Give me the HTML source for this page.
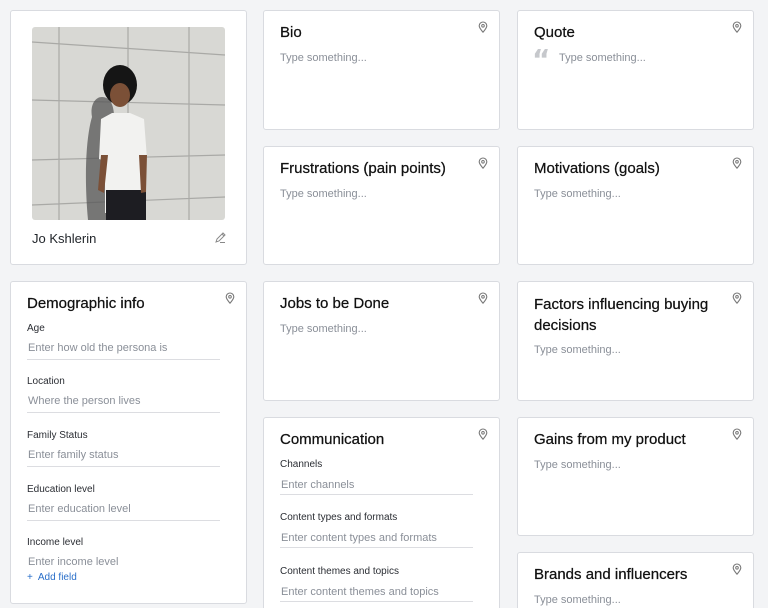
<!DOCTYPE html>
<html style="overflow:hidden;height:608px"><head><style>
body{margin:0;width:768px;height:608px;background:#f3f4f6;font-family:"Liberation Sans",Arial,sans-serif;position:relative;overflow:hidden}
.c{position:absolute;background:#fff;border:1px solid #d9dbe0;border-radius:3px;box-sizing:border-box}
.t{position:absolute;left:16px;top:12px;font-size:15px;color:#111;line-height:20px;-webkit-text-stroke:0.25px #111}
.p{position:absolute;left:16px;font-size:11px;color:#8a8f98}
.pin{position:absolute;right:11px;top:10px;width:10px;height:12px}
.l{position:absolute;left:16px;font-size:10px;color:#2a2d33}
.u{position:absolute;left:16px;width:193px;border-bottom:1px solid #dcdde1}
.ip{position:absolute;left:17px;font-size:11px;color:#8a8f98}
</style></head><body>
<svg width="0" height="0" style="position:absolute"><defs><symbol id="pn" viewBox="0 0 10 12"><path d="M5 11.2C3 8.8 1.2 6.9 1.2 4.8a3.8 3.8 0 0 1 7.6 0C8.8 6.9 7 8.8 5 11.2Z" fill="none" stroke="#777" stroke-width="1.1"/><circle cx="5" cy="4.8" r="1.3" fill="none" stroke="#777" stroke-width="1"/></symbol></defs></svg>

<div class="c" style="left:10px;top:10px;width:237px;height:255px">
<svg style="position:absolute;left:21px;top:16px" width="193" height="193" viewBox="0 0 193 193">
<rect width="193" height="193" rx="3" fill="#d8d8d4"/>
<g stroke="#a9a9a6" stroke-width="1.2" fill="none">
<path d="M27 0V193M96 0V193M157 0V193M0 15L193 28M0 73L193 78M0 133L193 128M0 178L193 170"/></g>
<path d="M70 70c-8 0-12 10-10 20-6 20-8 60-4 103h26V90c0-12-4-20-12-20z" fill="#555" opacity=".75"/>
<ellipse cx="88" cy="58" rx="17" ry="20" fill="#151515"/>
<ellipse cx="88" cy="68" rx="10" ry="12" fill="#7b5037"/>
<path d="M80 86h18l14 6 3 40-6 2 0 52H73l0-52-6-2 2-40z" fill="#f2f2f0"/>
<rect x="74" y="163" width="40" height="30" fill="#1d1d22"/>
<path d="M69 128l-3 35 6 3 4-38zM115 128l-1 37 -5 1 -2-38z" fill="#7b5037"/>
</svg>
<div style="position:absolute;left:21px;top:220px;font-size:13px;color:#1f2328">Jo Kshlerin</div>
<svg style="position:absolute;left:203px;top:221px" width="12" height="12" viewBox="0 0 12 12"><path d="M2 10l1-3 6-6 2 2-6 6zM8 2l2 2M6 10.5h5" fill="none" stroke="#888" stroke-width="1"/></svg>
</div>

<div class="c" style="left:263px;top:10px;width:237px;height:120px"><div class="t">Bio</div><svg class="pin"><use href="#pn"/></svg><div class="p" style="top:41px">Type something...</div></div>
<div class="c" style="left:517px;top:10px;width:237px;height:120px"><div class="t">Quote</div><svg class="pin"><use href="#pn"/></svg><div style="position:absolute;left:14px;top:38px;font-size:28px;font-weight:bold;color:#c6c8cc;line-height:22px;font-family:'DejaVu Sans',sans-serif">&ldquo;</div><div class="p" style="top:41px;left:41px">Type something...</div></div>

<div class="c" style="left:263px;top:146px;width:237px;height:119px"><div class="t">Frustrations (pain points)</div><svg class="pin"><use href="#pn"/></svg><div class="p" style="top:41px">Type something...</div></div>
<div class="c" style="left:517px;top:146px;width:237px;height:119px"><div class="t">Motivations (goals)</div><svg class="pin"><use href="#pn"/></svg><div class="p" style="top:41px">Type something...</div></div>

<div class="c" style="left:263px;top:281px;width:237px;height:120px"><div class="t">Jobs to be Done</div><svg class="pin"><use href="#pn"/></svg><div class="p" style="top:41px">Type something...</div></div>
<div class="c" style="left:517px;top:281px;width:237px;height:120px"><div class="t" style="line-height:21px;width:190px">Factors influencing buying decisions</div><svg class="pin"><use href="#pn"/></svg><div class="p" style="top:62px">Type something...</div></div>

<div class="c" style="left:10px;top:281px;width:237px;height:323px"><div class="t">Demographic info</div><svg class="pin"><use href="#pn"/></svg>
<div class="l" style="top:41px">Age</div><div class="ip" style="top:60px">Enter how old the persona is</div><div class="u" style="top:77px"></div>
<div class="l" style="top:94px">Location</div><div class="ip" style="top:113px">Where the person lives</div><div class="u" style="top:130px"></div>
<div class="l" style="top:148px">Family Status</div><div class="ip" style="top:167px">Enter family status</div><div class="u" style="top:184px"></div>
<div class="l" style="top:202px">Education level</div><div class="ip" style="top:221px">Enter education level</div><div class="u" style="top:238px"></div>
<div class="l" style="top:255px">Income level</div><div class="ip" style="top:274px">Enter income level</div>
<div style="position:absolute;left:16px;top:290px;font-size:10px;color:#2a6fc9">+&nbsp; Add field</div>
</div>

<div class="c" style="left:263px;top:417px;width:237px;height:200px"><div class="t">Communication</div><svg class="pin"><use href="#pn"/></svg>
<div class="l" style="top:41px">Channels</div><div class="ip" style="top:61px">Enter channels</div><div class="u" style="top:76px"></div>
<div class="l" style="top:94px">Content types and formats</div><div class="ip" style="top:114px">Enter content types and formats</div><div class="u" style="top:129px"></div>
<div class="l" style="top:148px">Content themes and topics</div><div class="ip" style="top:168px">Enter content themes and topics</div><div class="u" style="top:183px"></div>
</div>

<div class="c" style="left:517px;top:417px;width:237px;height:119px"><div class="t">Gains from my product</div><svg class="pin"><use href="#pn"/></svg><div class="p" style="top:41px">Type something...</div></div>
<div class="c" style="left:517px;top:552px;width:237px;height:80px"><div class="t">Brands and influencers</div><svg class="pin"><use href="#pn"/></svg><div class="p" style="top:41px">Type something...</div></div>
</body></html>
